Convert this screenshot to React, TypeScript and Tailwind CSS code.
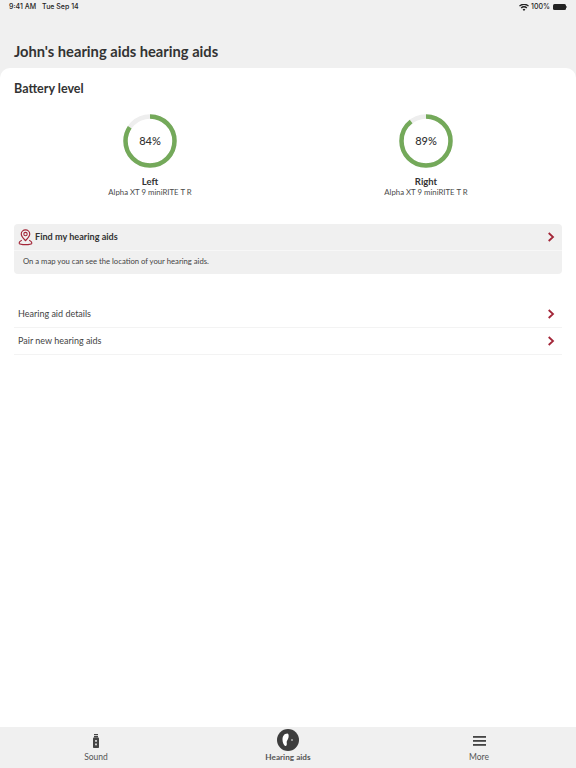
const font = { fontFamily: 'Lato, sans-serif' };

function BatteryRing({ percent, side }: { percent: number; side: string }) {
  const r = 24.5;
  const circumference = 2 * Math.PI * r;
  const filled = (circumference * percent) / 100;

  return (
    <div className="flex flex-col items-center">
      <div className="relative w-[54px] h-[54px]">
        <svg width="54" height="54" viewBox="0 0 54 54" className="-rotate-90">
          <circle cx="27" cy="27" r={r} fill="none" stroke="#eeeeee" strokeWidth="4.5" />
          <circle
            cx="27"
            cy="27"
            r={r}
            fill="none"
            stroke="#74a95a"
            strokeWidth="4.5"
            strokeDasharray={`${filled} ${circumference}`}
          />
        </svg>
        <div className="absolute inset-0 flex items-center justify-center text-[11px] font-medium text-[#333333]">
          {percent}%
        </div>
      </div>
      <div className="mt-[8px] text-[9.5px] leading-[12px] font-bold text-[#333333]">{side}</div>
      <div className="-mt-[1px] text-[7.8px] leading-[10px] text-[#4a4a4a]">Alpha XT 9 miniRITE T R</div>
    </div>
  );
}

function Chevron() {
  return (
    <svg width="8" height="10" viewBox="0 0 8 10" fill="none" className="shrink-0 translate-x-[1px]">
      <path d="M1.7 1 L6 5 L1.7 9" stroke="#a32638" strokeWidth="1.8" />
    </svg>
  );
}

function StatusBar() {
  return (
    <div className="h-[14px] flex items-center justify-between pl-[9px] pr-[9px] text-[7px] font-medium text-[#222222]" style={{ fontFamily: 'Inter, sans-serif' }}>
      <div className="flex gap-[6px]">
        <span>9:41 AM</span>
        <span>Tue Sep 14</span>
      </div>
      <div className="flex items-center gap-[2px]">
        <svg width="10" height="7" viewBox="0 0 10 7">
          <path d="M5 7 L3.6 5.4 A2 2 0 0 1 6.4 5.4 Z M2.7 4.5 L1.7 3.4 A4.7 4.7 0 0 1 8.3 3.4 L7.3 4.5 A3.3 3.3 0 0 0 2.7 4.5 Z M0.9 2.6 L0 1.7 A7 7 0 0 1 10 1.7 L9.1 2.6 A5.8 5.8 0 0 0 0.9 2.6 Z" fill="#222222" />
        </svg>
        <span>100%</span>
        <div className="ml-[1px] flex items-center">
          <div className="w-[13px] h-[6px] rounded-[1.5px] bg-[#222222]" />
          <div className="w-[1px] h-[2px] bg-[#888888]" />
        </div>
      </div>
    </div>
  );
}

function TabBar() {
  return (
    <div className="h-[41px] bg-[#f0f0f0] grid grid-cols-3 text-[8.5px] text-[#555555]">
      <div className="flex flex-col items-center pt-[7px]">
        <svg width="8" height="14" viewBox="0 0 8 14" className="mb-[4px]">
          <rect x="2" y="0" width="4" height="1.2" fill="#444444" />
          <rect x="2" y="2" width="4" height="1.5" fill="#444444" />
          <rect x="1" y="3.5" width="6" height="10.5" rx="0.8" fill="#444444" />
          <rect x="3.2" y="6" width="1.6" height="1.8" fill="#f0f0f0" />
          <rect x="3.2" y="9.5" width="1.6" height="1.8" fill="#f0f0f0" />
        </svg>
        <span className="leading-[10px]">Sound</span>
      </div>
      <div className="flex flex-col items-center pt-[2px]">
        <svg width="22" height="22" viewBox="0 0 22 22" className="mb-[1px]">
          <circle cx="11" cy="11" r="11" fill="#3d3d3d" />
          <path d="M10.5 4.5 C7 4.5 5.5 7.5 5.5 10.5 C5.5 13.5 6.5 15.5 8 17 C10 17.3 10 15 9.7 13.5 C9.5 12 11 10.5 11.5 8.5 C11.9 6.5 11.7 5 10.5 4.5 Z" fill="#ffffff" />
          <circle cx="15" cy="11" r="0.8" fill="#ffffff" />
        </svg>
        <span className="leading-[10px] text-[8.2px] font-bold">Hearing aids</span>
      </div>
      <div className="flex flex-col items-center pt-[9px] -translate-x-[1px]">
        <svg width="13" height="10" viewBox="0 0 13 10" className="mb-[6px]">
          <rect y="0" width="13" height="1.8" fill="#444444" />
          <rect y="4" width="13" height="1.8" fill="#444444" />
          <rect y="8" width="13" height="1.8" fill="#444444" />
        </svg>
        <span className="leading-[10px]">More</span>
      </div>
    </div>
  );
}

export default function App() {
  return (
    <div className="w-[576px] h-[768px] flex flex-col bg-[#f0f0f0] overflow-hidden" style={font}>
      <StatusBar />
      <h1 className="mt-[27px] px-[14px] text-[14.7px] leading-[20px] font-bold text-[#333333]">
        John's hearing aids hearing aids
      </h1>
      <main className="mt-[7px] flex-1 bg-white rounded-t-[10px] px-[14px] pt-[12px]">
        <h2 className="text-[12.5px] leading-[17px] font-bold text-[#333333]">Battery level</h2>

        <div className="mt-[17px] grid grid-cols-2 gap-[4px]">
          <div className="flex justify-center"><BatteryRing percent={84} side="Left" /></div>
          <div className="flex justify-center"><BatteryRing percent={89} side="Right" /></div>
        </div>

        <div className="mt-[27px] rounded-[4px] bg-[#f0f0f0] overflow-hidden">
          <div className="h-[27px] flex items-center pl-[4px] pr-[8px] border-b border-[#f7f7f7]">
            <svg width="15" height="17" viewBox="0 0 14 16" fill="none" className="mr-[2px]">
              <path d="M7 11 C5 8.8 3 7 3 4.8 A4 4 0 0 1 11 4.8 C11 7 9 8.8 7 11 Z" stroke="#a32638" strokeWidth="1.1" />
              <circle cx="7" cy="4.8" r="1.6" stroke="#a32638" strokeWidth="1" />
              <path d="M3.5 10.5 C1.5 11.5 0.8 12.5 1.2 13.6 C1.8 15 12.2 15 12.8 13.6 C13.2 12.5 12.5 11.5 10.5 10.5" stroke="#a32638" strokeWidth="1.1" />
            </svg>
            <span className="flex-1 text-[9.1px] font-bold text-[#333333]">Find my hearing aids</span>
            <Chevron />
          </div>
          <div className="h-[23px] flex items-center px-[9px] pb-[2px] text-[7.7px] text-[#444444]">
            On a map you can see the location of your hearing aids.
          </div>
        </div>

        <div className="mt-[27px]">
          <div className="h-[27px] flex items-center justify-between pl-[4px] pr-[8px] border-b border-[#f3f3f3] text-[9px] text-[#444444]">
            <span>Hearing aid details</span>
            <Chevron />
          </div>
          <div className="h-[27px] flex items-center justify-between pl-[4px] pr-[8px] border-b border-[#f3f3f3] text-[9px] text-[#444444]">
            <span>Pair new hearing aids</span>
            <Chevron />
          </div>
        </div>
      </main>
      <TabBar />
    </div>
  );
}
